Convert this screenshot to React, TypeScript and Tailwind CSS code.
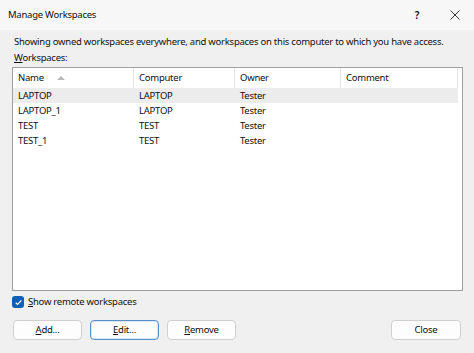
import React from 'react';

const rows = [
  { name: 'LAPTOP', computer: 'LAPTOP', owner: 'Tester', selected: true },
  { name: 'LAPTOP_1', computer: 'LAPTOP', owner: 'Tester' },
  { name: 'TEST', computer: 'TEST', owner: 'Tester' },
  { name: 'TEST_1', computer: 'TEST', owner: 'Tester' },
];

const Btn: React.FC<{
  focused?: boolean;
  className?: string;
  children: React.ReactNode;
}> = ({ focused, className, children }) => (
  <button
    className={
      'h-[20px] rounded-[4px] bg-[#fdfdfd] text-[9.5px] leading-[14px] tracking-[-0.25px] text-[#111] border ' +
      (focused
        ? 'border-[#5a90c8] shadow-[inset_0_0_0_1px_#d6e6f5] '
        : 'border-[#d0d0d0] ') +
      (className || '')
    }
  >
    {children}
  </button>
);

export default function App() {
  return (
    <div
      className="w-[474px] h-[353px] bg-[#f0f0f0] flex flex-col text-[#111] text-[9.5px] tracking-[-0.25px] overflow-hidden"
      style={{ fontFamily: '"Noto Sans", Lato, sans-serif' }}
    >
      {/* title bar */}
      <div className="h-[30px] shrink-0 bg-[#f7f7f7] flex items-center pl-[8px]">
        <span className="flex-1">Manage Workspaces</span>
        <span className="w-[16px] text-center mr-[25px] text-[10px] font-semibold">?</span>
        <svg width="10" height="10" viewBox="0 0 10 10" className="mr-[14px]">
          <path d="M0.5 0.5 L9.5 9.5 M9.5 0.5 L0.5 9.5" stroke="#333" strokeWidth="1" />
        </svg>
      </div>

      <div className="flex-1 flex flex-col px-[12px]">
        <div className="leading-[16px] mt-[4px] ml-[2px] whitespace-nowrap">
          Showing owned workspaces everywhere, and workspaces on this computer to which you have access.
        </div>
        <div className="leading-[16px] ml-[2px]">
          <span className="underline">W</span>orkspaces:
        </div>

        {/* list */}
        <div className="mt-[1px] h-[224px] shrink-0 bg-white border border-[#a0a0a0] flex flex-col w-[451px]">
          <div className="flex h-[20px] items-center w-[445px]">
            <div className="w-[121px] pl-[5px] flex items-center border-r border-[#e5e5e5] h-full">
              Name
              <svg width="8" height="5" viewBox="0 0 8 5" className="ml-[13px] mb-[2px]">
                <path d="M0 5 L4 1 L8 5 Z" fill="#b8b8b8" />
              </svg>
            </div>
            <div className="w-[101px] pl-[5px] border-r border-[#e5e5e5] h-full flex items-center">
              Computer
            </div>
            <div className="w-[106px] pl-[5px] border-r border-[#e5e5e5] h-full flex items-center">
              Owner
            </div>
            <div className="flex-1 pl-[5px] border-r border-[#e5e5e5] h-full flex items-center">
              Comment
            </div>
          </div>
          <div>
            {rows.map((r) => (
              <div
                key={r.name}
                className={
                  'flex h-[15px] leading-[15px] items-center w-[445px] ' +
                  (r.selected ? 'bg-[#ececec]' : '')
                }
              >
                <div className="w-[121px] pl-[5px]">{r.name}</div>
                <div className="w-[101px] pl-[5px]">{r.computer}</div>
                <div className="w-[106px] pl-[5px]">{r.owner}</div>
                <div className="flex-1" />
              </div>
            ))}
          </div>
        </div>

        {/* checkbox */}
        <div className="flex items-center h-[16px] mt-[3px]">
          <div className="w-[12px] h-[12px] rounded-[3px] bg-[#0f5fb8] flex items-center justify-center">
            <svg width="9" height="9" viewBox="0 0 9 9">
              <path d="M1.7 4.7 L3.6 6.5 L7.4 2.4" stroke="white" strokeWidth="1.2" fill="none" />
            </svg>
          </div>
          <span className="ml-[4px]">
            <span className="underline">S</span>how remote workspaces
          </span>
        </div>

        {/* buttons */}
        <div className="flex mt-[10px] ml-[1px]">
          <Btn className="w-[69px]">
            <span className="underline">A</span>dd...
          </Btn>
          <Btn focused className="w-[69px] ml-[8px]">
            <span className="underline">E</span>dit...
          </Btn>
          <Btn className="w-[69px] ml-[8px]">
            <span className="underline">R</span>emove
          </Btn>
          <div className="flex-1" />
          <Btn className="w-[70px] mr-[1px]">Close</Btn>
        </div>
      </div>
    </div>
  );
}
